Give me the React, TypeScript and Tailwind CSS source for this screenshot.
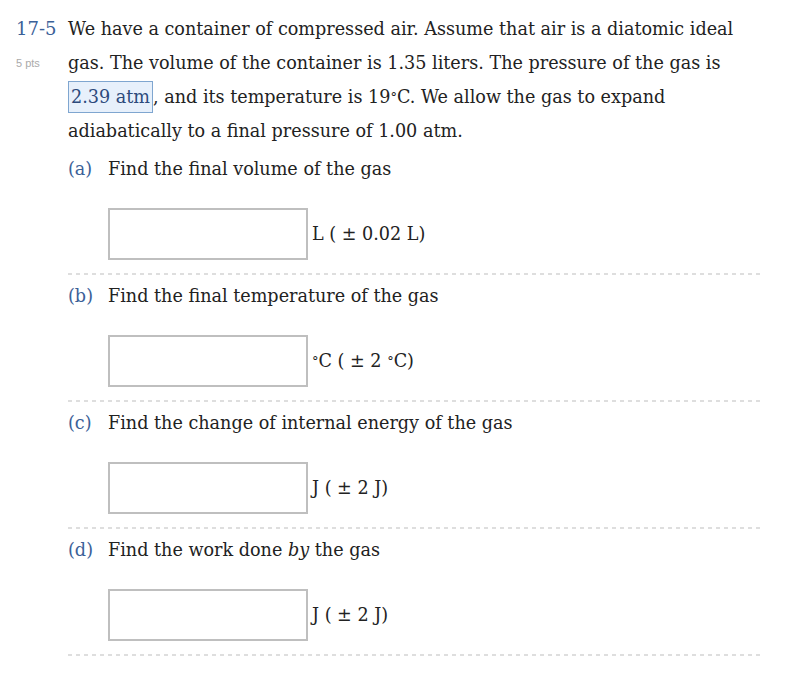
import React from "react";

const serif = { fontFamily: '"DejaVu Serif", "Liberation Serif", serif' };

function Part({ label, children, unit }: { label: string; children: React.ReactNode; unit: React.ReactNode }) {
  return (
    <div className="pt-[4px]">
      <div className="flex h-[34px] items-center text-[17.6px] leading-[34px]">
        <span className="w-[40px] text-[#3b6198]">{label}</span>
        <span className="text-[#222]">{children}</span>
      </div>
      <div className="mt-[22px] flex items-center pl-[40px]">
        <div className="h-[52px] w-[200px] border-2 border-[#bfbfbf] bg-white" />
        <div className="ml-[4px] text-[17.6px] text-[#222]">{unit}</div>
      </div>
      <div className="mt-[13px] h-[2px] w-[692px] bg-[linear-gradient(to_right,#dedede_55%,transparent_55%)] bg-[length:8px_2px]" />
    </div>
  );
}

const Deg = () => <span className="relative -top-[1px] text-[13px] leading-none">°</span>;

export default function App() {
  return (
    <div className="min-h-[674px] w-[788px] bg-white" style={serif}>
      <div className="flex pl-[16px] pt-[12px]">
        <div className="w-[52px] shrink-0">
          <div className="h-[34px] text-[18px] leading-[34px] text-[#3b6198]">17-5</div>
          <div
            className="pt-[4px] text-[11px] leading-[26px] text-[#aaaaaa]"
            style={{ fontFamily: '"Liberation Sans", Arial, sans-serif' }}
          >
            5 pts
          </div>
        </div>
        <div className="flex-1">
          <p className="text-[17.6px] leading-[34px] text-[#222]">
            We have a container of compressed air. Assume that air is a diatomic ideal
            <br />
            gas. The volume of the container is 1.35 liters. The pressure of the gas is
            <br />
            <span className="inline-block border border-[#7fa6d0] bg-[#e7f0fb] px-[2px] leading-[30px] text-[#2c4a7c]">
              2.39 atm
            </span>
            , and its temperature is 19<Deg />C. We allow the gas to expand
            <br />
            adiabatically to a final pressure of 1.00 atm.
          </p>
          <Part label="(a)" unit="L ( ± 0.02 L)">
            Find the final volume of the gas
          </Part>
          <Part
            label="(b)"
            unit={
              <>
                <Deg />C ( ± 2 <Deg />C)
              </>
            }
          >
            Find the final temperature of the gas
          </Part>
          <Part label="(c)" unit="J ( ± 2 J)">
            Find the change of internal energy of the gas
          </Part>
          <Part label="(d)" unit="J ( ± 2 J)">
            Find the work done <i>by</i> the gas
          </Part>
        </div>
      </div>
    </div>
  );
}
